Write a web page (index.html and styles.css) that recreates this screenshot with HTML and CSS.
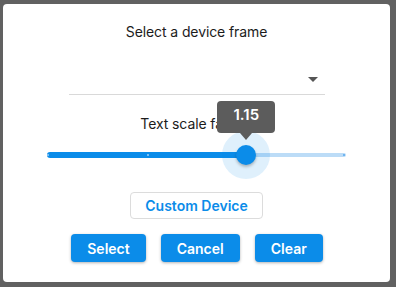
FILE: index.html
```html
<!DOCTYPE html>
<html>
<head>
<meta charset="utf-8">
<link rel="stylesheet" href="styles.css">
</head>
<body>
<div class="dialog">
  <div class="title">Select a device frame</div>
  <div class="dropdown">
    <span class="dd-value"></span>
    <span class="dd-arrow"></span>
  </div>
  <div class="label">Text scale factor:</div>
  <div class="slider">
    <div class="track">
      <div class="track-active" style="width: 66.67%"></div>
      <span class="tick on" style="left: 0%"></span>
      <span class="tick on" style="left: 33.33%"></span>
      <span class="tick off" style="left: 100%"></span>
    </div>
    <div class="thumb-wrap" style="left: 66.67%">
      <div class="halo"></div>
      <div class="thumb"></div>
      <div class="tooltip">1.15<span class="tip-arrow"></span></div>
    </div>
  </div>
  <button class="outline-btn">Custom Device</button>
  <div class="actions">
    <button class="btn">Select</button>
    <button class="btn">Cancel</button>
    <button class="btn">Clear</button>
  </div>
</div>
</body>
</html>
```

FILE: styles.css
```css
html, body {
  margin: 0;
  padding: 0;
}
body {
  background: #616161;
  width: 396px;
  height: 287px;
  overflow: hidden;
  font-family: "Inter", "Roboto", "Liberation Sans", sans-serif;
  font-size: 14px;
  line-height: 20px;
  color: #1c1c1c;
}
.dialog {
  margin: 4px 0 0 3px;
  width: 387px;
  height: 278px;
  box-sizing: border-box;
  background: #ffffff;
  border-radius: 4px;
  padding: 18px 0 20px;
  display: flex;
  flex-direction: column;
  align-items: center;
}
.title {
  height: 20px;
  letter-spacing: -0.1px;
}
.dropdown {
  margin-top: 21px;
  width: 256px;
  height: 32px;
  box-sizing: border-box;
  border-bottom: 1.5px solid #d9d9d9;
  display: flex;
  align-items: center;
  justify-content: space-between;
  margin-left: 1px;
}
.dd-arrow {
  width: 0;
  height: 0;
  border-left: 5px solid transparent;
  border-right: 5px solid transparent;
  border-top: 5px solid #555555;
  margin-right: 7px;
  margin-top: 1px;
}
.label {
  margin-top: 19px;
  height: 20px;
  letter-spacing: -0.1px;
}
.slider {
  margin-top: 11px;
  width: 299px;
  height: 20px;
  position: relative;
}
.track {
  position: absolute;
  left: 0;
  right: 0;
  top: 8px;
  height: 4px;
  background: #bcdcf7;
  border-radius: 2px;
}
.track-active {
  position: absolute;
  left: 0;
  top: -1px;
  height: 6px;
  background: #0b8ce9;
  border-radius: 3px;
}
.tick {
  position: absolute;
  top: 1px;
  width: 2px;
  height: 2px;
  border-radius: 50%;
  margin-left: -1px;
}
.tick.on { background: #9fd0f6; margin-left: 0; }
.tick.off { background: #59a9ee; margin-left: -3px; }
.thumb-wrap {
  position: absolute;
  top: 10px;
  width: 0;
  height: 0;
}
.halo {
  position: absolute;
  left: -24px;
  top: -24px;
  width: 48px;
  height: 48px;
  border-radius: 50%;
  background: rgba(11, 140, 233, 0.13);
}
.thumb {
  position: absolute;
  left: -10px;
  top: -10px;
  width: 20px;
  height: 20px;
  border-radius: 50%;
  background: #0b8ce9;
  box-shadow: 0 2px 3px rgba(0, 0, 0, 0.25);
}
.tooltip {
  position: absolute;
  left: -29px;
  top: -54px;
  width: 58px;
  height: 32px;
  box-sizing: border-box;
  background: #5c5c5c;
  border-radius: 4px;
  color: #ffffff;
  font-weight: 600;
  font-size: 15px;
  text-align: center;
  padding-bottom: 4px;
  line-height: 28px;
}
.tip-arrow {
  position: absolute;
  left: 23px;
  bottom: -7px;
  width: 0;
  height: 0;
  border-left: 6px solid transparent;
  border-right: 6px solid transparent;
  border-top: 7px solid #5c5c5c;
}
.outline-btn {
  margin-top: 27px;
  width: 133px;
  height: 27px;
  box-sizing: border-box;
  background: #ffffff;
  border: 1px solid #dcdcdc;
  border-radius: 4px;
  color: #0b8ce9;
  font-family: inherit;
  font-size: 14px;
  font-weight: 600;
  padding: 0;
}
.actions {
  margin-top: 15px;
  display: flex;
  gap: 15px;
  margin-left: 1px;
}
.btn {
  height: 28px;
  padding: 0 16px;
  border: none;
  border-radius: 4px;
  background: #0b8ce9;
  color: #ffffff;
  font-family: inherit;
  font-size: 14px;
  font-weight: 600;
  box-shadow: 0 1px 3px rgba(0, 0, 0, 0.3);
}
```
